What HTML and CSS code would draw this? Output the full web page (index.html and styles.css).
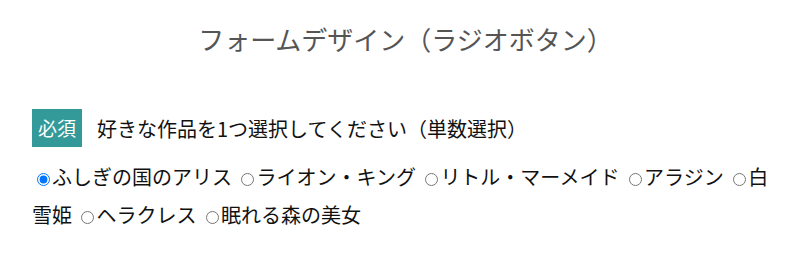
FILE: index.html
```html
<!DOCTYPE html>
<html lang="ja">
  <head>
    <meta charset="UTF-8" />
    <meta name="viewport" content="width=device-width, initial-scale=1.0" />
    <title>フォームデザイン（ラジオボタン）</title>
    <link rel="stylesheet" href="styles.css">
  </head>
  <body>
    <h1 class="title">フォームデザイン（ラジオボタン）</h1>

    <div class="field">
      <div class="field-head">
        <span class="badge">必須</span>
        <span class="question">好きな作品を1つ選択してください（単数選択）</span>
      </div>
      <div class="options">
        <label><input type="radio" name="movie" checked>ふしぎの国のアリス</label>
        <label><input type="radio" name="movie">ライオン・キング</label>
        <label><input type="radio" name="movie">リトル・マーメイド</label>
        <label><input type="radio" name="movie">アラジン</label>
        <label><input type="radio" name="movie">白雪姫</label>
        <label><input type="radio" name="movie">ヘラクレス</label>
        <label><input type="radio" name="movie">眠れる森の美女</label>
      </div>
    </div>
  </body>
</html>
```

FILE: styles.css
```css
body {
  font-family: "Noto Sans CJK JP", "Noto Sans", sans-serif;
  margin: 8px;
  color: #111;
  background: #fff;
}

.title {
  font-size: 26px;
  font-weight: normal;
  color: #555;
  text-align: center;
  margin: 13px 0 0;
  line-height: 36px;
}

.field {
  padding: 0 24px;
  margin-top: 52px;
}

.field-head {
  display: flex;
  align-items: center;
  gap: 15px;
}

.badge {
  background: #339a99;
  color: #fff;
  font-size: 19px;
  width: 50px;
  height: 38px;
  line-height: 38px;
  text-align: center;
}

.question {
  font-size: 20px;
}

.options {
  margin-top: 11px;
  font-size: 20px;
  line-height: 38px;
}

.options input {
  width: 13px;
  height: 13px;
  margin: 0 2px 0 5px;
  vertical-align: -1px;
}
```
